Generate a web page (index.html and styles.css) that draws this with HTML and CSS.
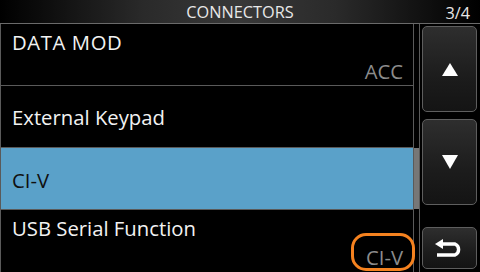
FILE: index.html
```html
<!DOCTYPE html>
<html>
<head>
<meta charset="utf-8">
<link rel="stylesheet" href="styles.css">
</head>
<body>
<div class="screen">
  <div class="titlebar">
    <span class="title">CONNECTORS</span>
    <span class="page">3/4</span>
  </div>
  <div class="main">
    <div class="list">
      <div class="row two">
        <div class="label caps">DATA MOD</div>
        <div class="value">ACC</div>
      </div>
      <div class="row one">
        <div class="label">External Keypad</div>
      </div>
      <div class="row one selected">
        <div class="label">CI-V</div>
      </div>
      <div class="row two last">
        <div class="label">USB Serial Function</div>
        <div class="value">CI-V</div>
        <div class="ring"></div>
      </div>
    </div>
    <div class="scroll"><div class="thumb"></div></div>
    <div class="buttons">
      <div class="btn big">
        <svg width="16" height="13" viewBox="0 0 16 13"><polygon points="8,0 16,13 0,13" fill="#fff"/></svg>
      </div>
      <div class="btn big down">
        <svg width="16" height="14" viewBox="0 0 16 14"><polygon points="0,0 16,0 8,14" fill="#fff"/></svg>
      </div>
      <div class="btn small">
        <svg width="30" height="18" viewBox="0 0 30 18"><polygon points="0,5 8,0 8,10" fill="#fff"/><path d="M7 5 H20 A6 6 0 0 1 20 16 H2" fill="none" stroke="#fff" stroke-width="3.4"/></svg>
      </div>
    </div>
  </div>
</div>
</body>
</html>
```

FILE: styles.css
```css
html, body {
  margin: 0;
  padding: 0;
  background: #000;
}
.screen {
  width: 480px;
  height: 272px;
  background: #000;
  display: flex;
  flex-direction: column;
  font-family: "Open Sans", "Noto Sans", sans-serif;
  overflow: hidden;
}
.titlebar {
  height: 23px;
  border-bottom: 1px solid #6a6a6a;
  background: linear-gradient(90deg, #000 0%, #2a2a2a 30%, #383838 50%, #2a2a2a 70%, #000 100%);
  position: relative;
  display: flex;
  justify-content: center;
  align-items: center;
  color: #e8e8e8;
  font-size: 16.3px;
}
.page {
  position: absolute;
  right: 10px;
  top: 2px;
  font-size: 16.3px;
}
.main {
  flex: 1;
  display: flex;
}
.list {
  width: 412px;
  border-left: 1px solid #5a5a5a;
  display: flex;
  flex-direction: column;
}
.row {
  height: 61px;
  border-bottom: 1px solid #5a5a5a;
  box-sizing: content-box;
  position: relative;
  color: #f2f2f2;
  font-size: 20.3px;
  line-height: 20px;
}
.caps {
  letter-spacing: 0.6px;
}
.row.last {
  border-bottom: none;
  height: 62px;
}
.row.two {
  padding: 0 10px 0 11px;
  height: 53px;
  padding-top: 8px;
}
.row.two.last {
  height: 54px;
}
.row.one {
  display: flex;
  align-items: center;
  padding-left: 11px;
}
.row.selected {
  background: #5aa1c9;
  color: #101010;
  padding-top: 3px;
  height: 58px;
}
.value {
  margin-top: 9px;
  text-align: right;
  color: #8c8c8c;
}
.ring {
  position: absolute;
  left: 350px;
  top: 23px;
  width: 58px;
  height: 32px;
  border: 3.5px solid #f5821f;
  border-radius: 15px;
}
.scroll {
  width: 5px;
  border-left: 1px solid #5a5a5a;
  border-right: 1px solid #5a5a5a;
}
.thumb {
  margin-top: 124px;
  height: 61px;
  background: #777;
}
.buttons {
  flex: 1;
  display: flex;
  flex-direction: column;
  padding: 2px 3px 0 2px;
}
.btn {
  box-sizing: border-box;
  border: 1px solid #5e5e5e;
  border-radius: 5px;
  background: linear-gradient(180deg, #2e2e2e 0%, #1c1c1c 60%, #141414 100%);
  display: flex;
  align-items: center;
  justify-content: center;
}
.big {
  height: 86px;
}
.down {
  margin-top: 7px;
}
.small {
  margin-top: 22px;
  height: 42px;
}
```
